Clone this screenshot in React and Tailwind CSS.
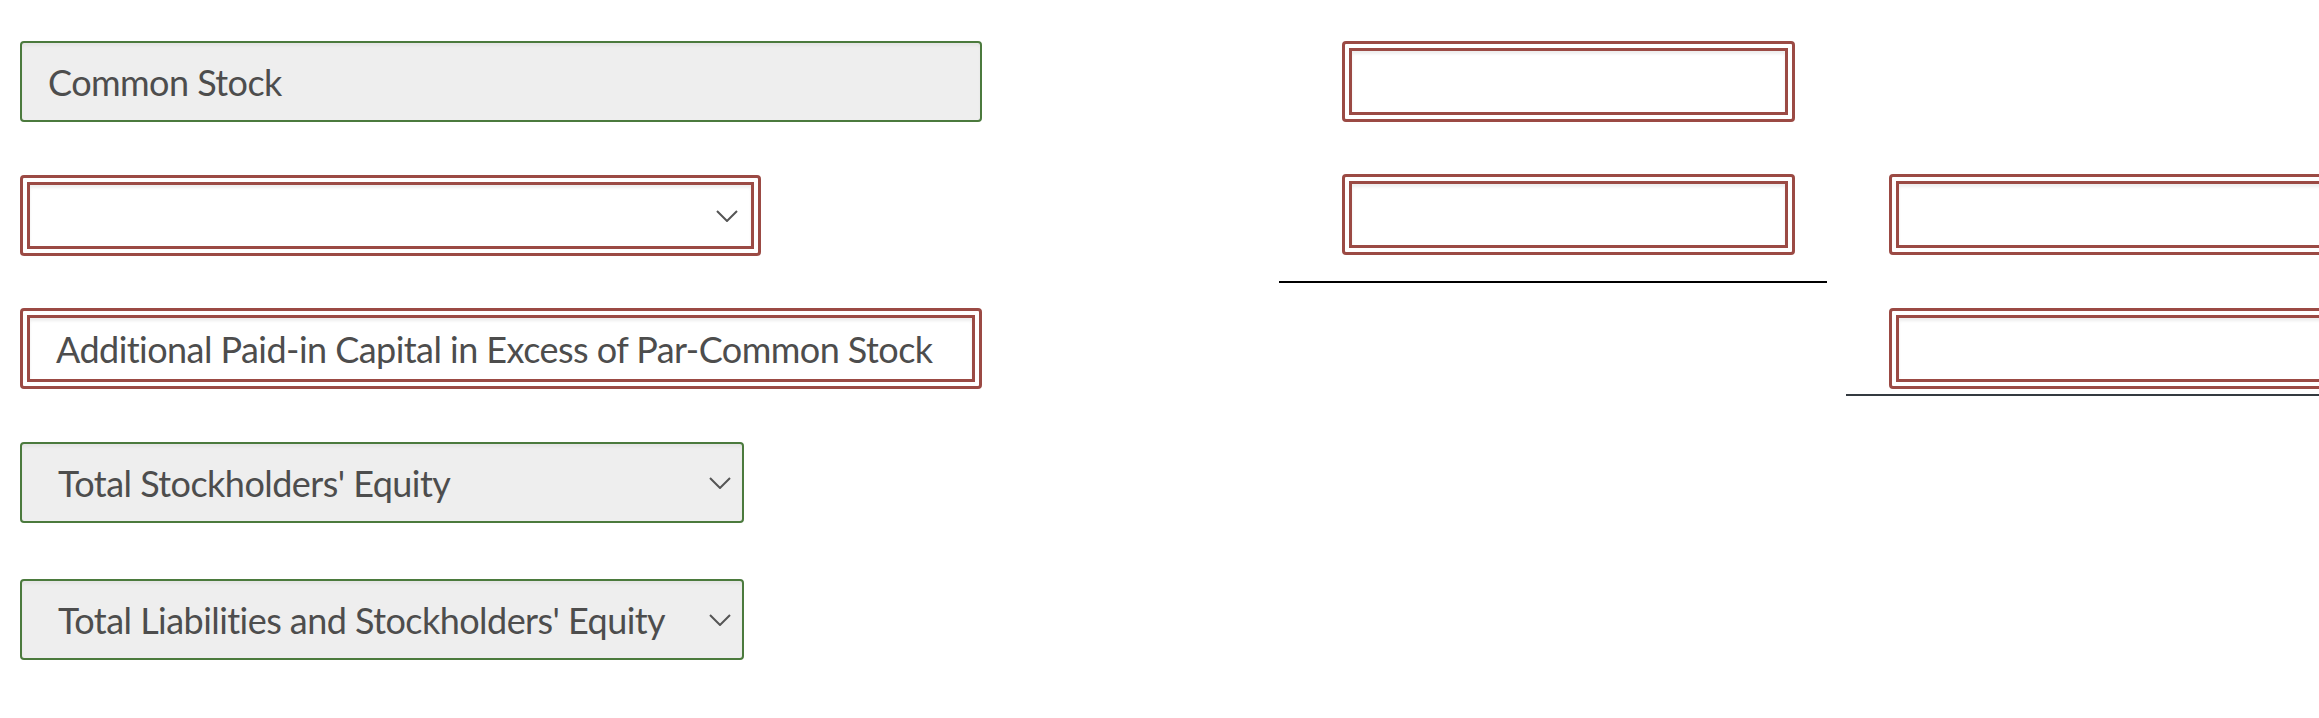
import React from "react";

const Chevron = () => (
  <svg width="22" height="12" viewBox="0 0 22 12" className="shrink-0">
    <polyline points="1,1 11,11 21,1" fill="none" stroke="#555555" strokeWidth="2" />
  </svg>
);

function RedBox({ className = "", children }) {
  return (
    <div className={`h-[81px] rounded-[4px] border-[3px] border-[#9b4a44] bg-white p-[4px] ${className}`}>
      <div className="flex h-full w-full items-center border-[3px] border-[#9b4a44] bg-white shadow-[inset_0_3px_3px_rgba(0,0,0,0.07)]">
        {children}
      </div>
    </div>
  );
}

function GreenBox({ className = "", children }) {
  return (
    <div
      className={`flex h-[81px] items-center rounded-[4px] border-2 border-[#4b7a3d] bg-[#eeeeee] shadow-[inset_0_3px_3px_rgba(0,0,0,0.04)] ${className}`}
    >
      {children}
    </div>
  );
}

export default function App() {
  return (
    <div
      className="flex h-[718px] w-[2319px] overflow-hidden bg-white text-[36px] tracking-[-0.55px] text-[#4d4d4d] [font-variant-ligatures:none]"
      style={{ fontFamily: "Lato, 'Open Sans', sans-serif" }}
    >
      {/* left column */}
      <div className="flex w-[1279px] shrink-0 flex-col pl-[20px] pt-[41px]">
        <GreenBox className="w-[962px] pl-[26px]">
          <span className="leading-none">Common Stock</span>
        </GreenBox>
        <RedBox className="mt-[53px] w-[741px]">
          <div className="flex-1" />
          <div className="pr-[13px]">
            <Chevron />
          </div>
        </RedBox>
        <RedBox className="mt-[52px] w-[962px]">
          <span className="pl-[26px] leading-none">Additional Paid-in Capital in Excess of Par-Common Stock</span>
        </RedBox>
        <GreenBox className="mt-[53px] w-[724px] pl-[36px] pr-[11px]">
          <span className="flex-1 leading-none">Total Stockholders' Equity</span>
          <Chevron />
        </GreenBox>
        <GreenBox className="mt-[56px] w-[724px] pl-[36px] pr-[11px]">
          <span className="flex-1 leading-none">Total Liabilities and Stockholders' Equity</span>
          <Chevron />
        </GreenBox>
      </div>

      {/* column 1 */}
      <div className="flex w-[548px] shrink-0 flex-col pt-[41px]">
        <RedBox className="ml-[63px] w-[453px]" />
        <RedBox className="ml-[63px] mt-[52px] w-[453px]" />
        <div className="mt-[26px] h-[2px] w-full bg-black" />
      </div>

      {/* column 2 */}
      <div className="ml-[19px] flex w-[600px] shrink-0 flex-col pt-[174px]">
        <RedBox className="ml-[43px] w-[557px]" />
        <RedBox className="ml-[43px] mt-[53px] w-[557px]" />
        <div className="mt-[5px] h-[2px] w-full bg-[#343a40]" />
      </div>
    </div>
  );
}
